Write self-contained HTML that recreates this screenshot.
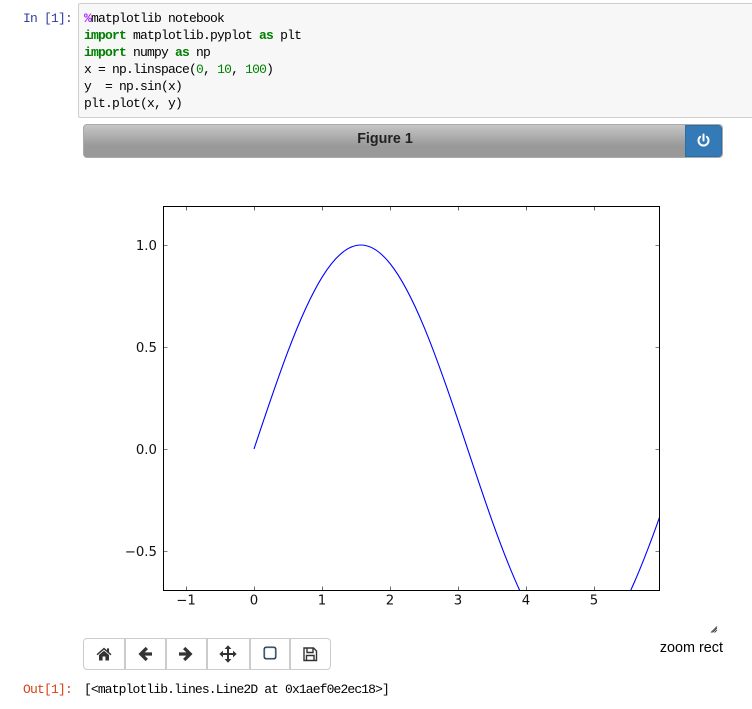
<!DOCTYPE html>
<html><head><meta charset="utf-8">
<style>
html,body{margin:0;padding:0;background:#fff;}
#p{position:relative;width:752px;height:709px;overflow:hidden;background:#fff;}
.a{position:absolute;box-sizing:border-box;}
.m{position:absolute;font-family:"Liberation Mono",monospace;font-size:13px;letter-spacing:-0.8px;line-height:17px;height:17px;white-space:pre;color:#000;}
.k{color:#008000;font-weight:bold;}
.n{color:#008000;}
.g{color:#AA22FF;font-weight:bold;}
.b{position:absolute;box-sizing:border-box;top:638px;height:32px;border:1px solid #ccc;background:#fff;}
</style></head>
<body><div id="p">
<div class="m" style="left:23px;top:10px;color:#303F9F;">In [1]:</div>
<div class="a" style="left:78px;top:3px;width:680px;height:115px;background:#f7f7f7;border:1px solid #cfcfcf;border-radius:2px;"></div>
<div class="m" style="left:84px;top:10px;"><span class="g">%</span>matplotlib notebook</div>
<div class="m" style="left:84px;top:27px;"><span class="k">import</span> matplotlib.pyplot <span class="k">as</span> plt</div>
<div class="m" style="left:84px;top:44px;"><span class="k">import</span> numpy <span class="k">as</span> np</div>
<div class="m" style="left:84px;top:61px;">x = np.linspace(<span class="n">0</span>, <span class="n">10</span>, <span class="n">100</span>)</div>
<div class="m" style="left:84px;top:78px;">y  = np.sin(x)</div>
<div class="m" style="left:84px;top:95px;">plt.plot(x, y)</div>

<div class="a" style="left:83px;top:124px;width:640px;height:34px;border:1px solid #aaa;border-radius:4px;background:linear-gradient(#c6c6c6,#999 65%,#999);"></div>
<div class="a" style="left:84px;top:131px;width:602px;height:17px;text-align:center;font:bold 14.3px/17px 'Liberation Sans',sans-serif;color:#222;">Figure 1</div>
<div class="a" style="left:685px;top:125px;width:37px;height:32px;background:#337ab7;border:1px solid #2e6da4;border-radius:0 4px 4px 0;"></div>
<svg class="a" style="left:685px;top:125px;" width="37" height="32" viewBox="0 0 37 32"><path d="M15.2 11.8a5 5 0 1 0 6.6 0" fill="none" stroke="#fff" stroke-width="2" stroke-linecap="round"/><path d="M18.5 9.5v6" fill="none" stroke="#fff" stroke-width="2" stroke-linecap="round"/></svg>

<svg class="a" style="left:0;top:0;" width="752" height="709" viewBox="0 0 752 709">
<defs><clipPath id="c"><rect x="163.5" y="206.5" width="496" height="384"/></clipPath></defs>
<g clip-path="url(#c)" fill="none" stroke="#0000ff" stroke-width="1.1">
<path d="M254 449C265.33 415 276.67 381.04 288 351.2C299.33 321.36 310.67 295.71 322 277.34C333.33 258.97 344.67 247.92 356 245.51C367.33 243.1 378.67 249.35 390 263.5C401.33 277.65 412.67 299.67 424 326.91C435.33 354.15 446.67 386.55 458 420.21C469.33 453.87 480.67 488.72 492 520.56C503.33 552.4 514.67 581.17 526 603.39"/>
<path transform="translate(1.5 0)" d="M628 592.93C639.33 568.84 650.67 538.65 662 506"/>
</g>
<g stroke="#000" stroke-width="0.6" fill="none">
<path d="M186.5 206.5v4M254.5 206.5v4M322.5 206.5v4M390.5 206.5v4M458.5 206.5v4M526.5 206.5v4M594.5 206.5v4"/>
<path d="M186.5 590.5v-4M254.5 590.5v-4M322.5 590.5v-4M390.5 590.5v-4M458.5 590.5v-4M526.5 590.5v-4M594.5 590.5v-4"/>
<path d="M163.5 245.5h4M163.5 347.5h4M163.5 449.5h4M163.5 551.5h4"/>
<path d="M659.5 245.5h-4M659.5 347.5h-4M659.5 449.5h-4M659.5 551.5h-4"/>
</g>
<rect x="163.5" y="206.5" width="496" height="384" fill="none" stroke="#000" stroke-width="1"/>
<g font-family="'DejaVu Sans',sans-serif" font-size="13.3" fill="#111">
<g text-anchor="end">
<text x="157" y="250">1.0</text>
<text x="157" y="352">0.5</text>
<text x="157" y="454">0.0</text>
<text x="157" y="556">−0.5</text>
</g>
<g text-anchor="middle">
<text x="186" y="604.5">−1</text>
<text x="254" y="604.5">0</text>
<text x="322" y="604.5">1</text>
<text x="390" y="604.5">2</text>
<text x="458" y="604.5">3</text>
<text x="526" y="604.5">4</text>
<text x="594" y="604.5">5</text>
</g>
</g>
<path d="M711 632.5l6-6M712.5 632.5l4.5-4.5M714.5 632.5l2.5-2.5" stroke="#222" stroke-width="0.8" fill="none"/>
</svg>

<div class="b" style="left:83px;width:42px;border-radius:4px 0 0 4px;"></div>
<div class="b" style="left:125px;width:41px;"></div>
<div class="b" style="left:166px;width:41px;"></div>
<div class="b" style="left:207px;width:43px;"></div>
<div class="b" style="left:250px;width:40px;"></div>
<div class="b" style="left:290px;width:41px;border-radius:0 4px 4px 0;"></div>

<svg class="a" style="left:0;top:630px;" width="340" height="50" viewBox="0 630 340 50">
<path fill="#333" d="M96.5 654.2L104 647.6L107 650.2V648.4H109V652L111.5 654.2L110.5 655.2L104 649.6L97.5 655.2ZM99 655L104 650.8L109 655V660.5H105.4V656.5H102.6V660.5H99Z"/>
<path fill="none" stroke="#333" stroke-width="3.3" d="M152 654H141M146.8 648L140.8 654L146.8 660"/>
<path fill="none" stroke="#333" stroke-width="3.3" d="M179 654H190M184.2 648L190.2 654L184.2 660"/>
<path fill="none" stroke="#333" stroke-width="2" d="M228 647.5V660.5M221.5 654H234.5"/>
<path fill="#333" d="M228 645.3L231.4 649H224.6ZM228 662.7L231.4 659H224.6ZM219.3 654L223 650.6V657.4ZM236.7 654L233 650.6V657.4Z"/>
<rect x="264.2" y="647.2" width="11.6" height="11.6" rx="2" fill="none" stroke="#333" stroke-width="1.4"/>
<rect x="264.9" y="647.9" width="10.2" height="10.2" rx="1.5" fill="none" stroke="#4a90d9" stroke-width="0.5"/>
<path fill="none" stroke="#333" stroke-width="1.4" d="M304 648H313.5L316.5 651V660.5H304ZM307 648V652.5H313V648M306.5 660.5V655.5H314V660.5"/>
</svg>

<div class="a" style="left:640px;top:640px;width:83px;height:16px;text-align:right;font:14.4px/16px 'Liberation Sans',sans-serif;color:#000;white-space:nowrap;">zoom rect</div>

<div class="m" style="left:23px;top:681px;color:#D84315;">Out[1]:</div>
<div class="m" style="left:84px;top:681px;letter-spacing:-0.87px;">[&lt;matplotlib.lines.Line2D at 0x1aef0e2ec18&gt;]</div>
</div></body></html>
